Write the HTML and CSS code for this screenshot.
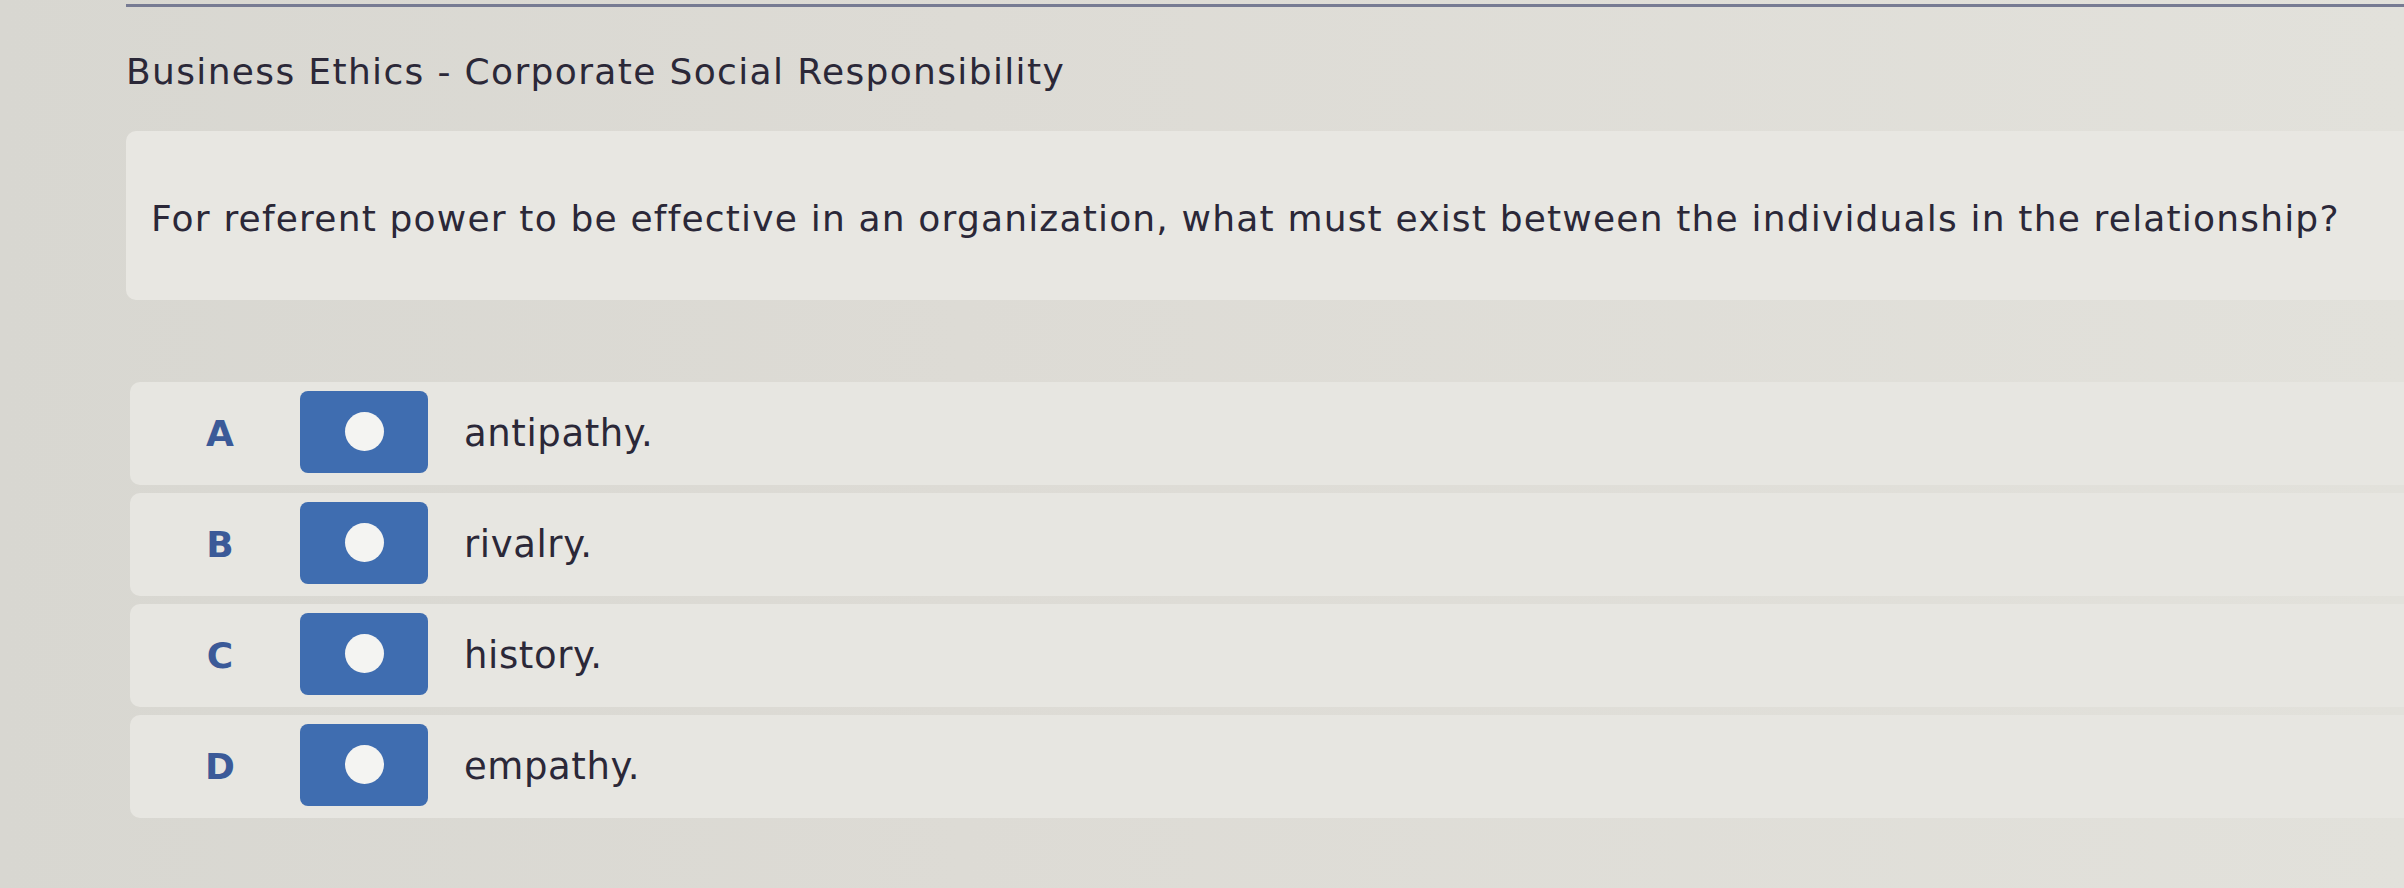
FILE: index.html
```html
<!DOCTYPE html>
<html>
	<head>
		<meta charset="utf-8">
		<title>Business Ethics - Corporate Social Responsibility</title>
		<link rel="stylesheet" href="styles.css">
	</head>
	<body>
		<div class="page">
			<div class="topline"></div>
			<h1 class="title">Business Ethics - Corporate Social Responsibility</h1>

			<div class="question">
				<p>For referent power to be effective in an organization, what must exist between the individuals in the relationship?</p>
			</div>

			<ul class="answers">
				<li class="answer">
					<span class="letter">A</span>
					<span class="radio"><i class="dot"></i></span>
					<span class="text">antipathy.</span>
				</li>
				<li class="answer">
					<span class="letter">B</span>
					<span class="radio"><i class="dot"></i></span>
					<span class="text">rivalry.</span>
				</li>
				<li class="answer">
					<span class="letter">C</span>
					<span class="radio"><i class="dot"></i></span>
					<span class="text">history.</span>
				</li>
				<li class="answer">
					<span class="letter">D</span>
					<span class="radio"><i class="dot"></i></span>
					<span class="text">empathy.</span>
				</li>
			</ul>
		</div>
	</body>
</html>
```

FILE: styles.css
```css
* {
	margin: 0;
	padding: 0;
	box-sizing: border-box;
}

ul {
	list-style: none;
}

html,
body {
	height: 100%;
}

body {
	overflow: hidden;
	background: linear-gradient(to right, #d8d7d1 0%, #dddbd5 40%, #e2e1db 100%);
	font-family: "DejaVu Sans", Verdana, sans-serif;
	color: #2b2838;
}

.page {
	padding-left: 126px;
	margin-right: -24px;
}

.topline {
	height: 3px;
	margin-top: 4px;
	background: #777b93;
}

.title {
	margin-top: 43px;
	font-size: 36px;
	font-weight: normal;
	line-height: 44px;
	letter-spacing: 1.35px;
}

.question {
	height: 169px;
	margin-top: 37px;
	padding: 6px 0 0 25px;
	display: flex;
	align-items: center;
	background: #e8e7e2;
	border-radius: 10px 0 0 10px;
}

.question p {
	font-size: 36px;
	line-height: 44px;
	letter-spacing: 1.18px;
}

.answers {
	margin-top: 82px;
	margin-left: 4px;
	display: flex;
	flex-direction: column;
	gap: 8px;
}

.answer {
	height: 103px;
	padding-left: 60px;
	display: flex;
	align-items: center;
	background: #e7e6e1;
	border-radius: 10px 0 0 10px;
}

.answer .letter {
	width: 60px;
	text-align: center;
	font-size: 36px;
	font-weight: bold;
	color: #3b5a98;
}

.answer .radio {
	width: 128px;
	height: 82px;
	margin-left: 50px;
	margin-top: -4px;
	display: flex;
	align-items: center;
	justify-content: center;
	background: #3f6db0;
	border-radius: 8px;
}

.answer .dot {
	width: 39px;
	height: 39px;
	background: #f4f4f2;
	border-radius: 50%;
}

.answer .text {
	margin-left: 36px;
	font-size: 37px;
	line-height: 44px;
	letter-spacing: 0.6px;
}
```
